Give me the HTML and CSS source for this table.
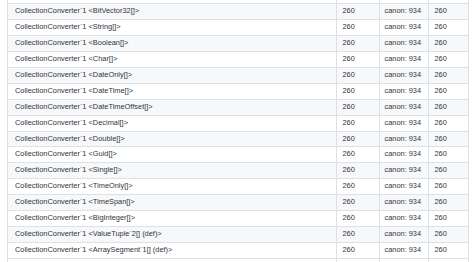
FILE: index.html
```html
<!DOCTYPE html>
<html>
<head>
<meta charset="utf-8">
<link rel="stylesheet" href="styles.css">
</head>
<body>
<div class="wrap">
<table class="tbl">
<colgroup><col class="c1"><col class="c2"><col class="c3"><col class="c4"></colgroup>
<tbody>
<tr class="edge"><td></td><td></td><td></td><td></td></tr>
<tr><td>CollectionConverter`1 &lt;BitVector32[]&gt;</td><td>260</td><td>canon: 934</td><td>260</td></tr>
<tr><td>CollectionConverter`1 &lt;String[]&gt;</td><td>260</td><td>canon: 934</td><td>260</td></tr>
<tr><td>CollectionConverter`1 &lt;Boolean[]&gt;</td><td>260</td><td>canon: 934</td><td>260</td></tr>
<tr><td>CollectionConverter`1 &lt;Char[]&gt;</td><td>260</td><td>canon: 934</td><td>260</td></tr>
<tr><td>CollectionConverter`1 &lt;DateOnly[]&gt;</td><td>260</td><td>canon: 934</td><td>260</td></tr>
<tr><td>CollectionConverter`1 &lt;DateTime[]&gt;</td><td>260</td><td>canon: 934</td><td>260</td></tr>
<tr><td>CollectionConverter`1 &lt;DateTimeOffset[]&gt;</td><td>260</td><td>canon: 934</td><td>260</td></tr>
<tr><td>CollectionConverter`1 &lt;Decimal[]&gt;</td><td>260</td><td>canon: 934</td><td>260</td></tr>
<tr><td>CollectionConverter`1 &lt;Double[]&gt;</td><td>260</td><td>canon: 934</td><td>260</td></tr>
<tr><td>CollectionConverter`1 &lt;Guid[]&gt;</td><td>260</td><td>canon: 934</td><td>260</td></tr>
<tr><td>CollectionConverter`1 &lt;Single[]&gt;</td><td>260</td><td>canon: 934</td><td>260</td></tr>
<tr><td>CollectionConverter`1 &lt;TimeOnly[]&gt;</td><td>260</td><td>canon: 934</td><td>260</td></tr>
<tr><td>CollectionConverter`1 &lt;TimeSpan[]&gt;</td><td>260</td><td>canon: 934</td><td>260</td></tr>
<tr><td>CollectionConverter`1 &lt;BigInteger[]&gt;</td><td>260</td><td>canon: 934</td><td>260</td></tr>
<tr><td>CollectionConverter`1 &lt;ValueTuple`2[] (def)&gt;</td><td>260</td><td>canon: 934</td><td>260</td></tr>
<tr><td>CollectionConverter`1 &lt;ArraySegment`1[] (def)&gt;</td><td>260</td><td>canon: 934</td><td>260</td></tr>
<tr class="edge"><td></td><td></td><td></td><td></td></tr>
</tbody>
</table>
</div>
</body>
</html>
```
FILE: styles.css
```css
html, body {
  margin: 0;
  padding: 0;
  background: #ffffff;
}
.wrap {
  width: 474px;
  height: 262px;
  overflow: hidden;
  padding-left: 6.5px;
  box-sizing: border-box;
}
.tbl {
  border-collapse: collapse;
  table-layout: fixed;
  width: 461px;
  margin-top: -11.93px;
  font-family: "Liberation Sans", Arial, sans-serif;
  font-size: 7.4px;
  color: #303438;
}
.c1 { width: 329.5px; }
.c2 { width: 42.5px; }
.c3 { width: 49px; }
.c4 { width: 40px; }
.tbl td {
  border: 1px solid #dde1e6;
  height: 14.93px;
  padding: 0 0 0 6px;
  line-height: 14.93px;
  white-space: nowrap;
  overflow: hidden;
  box-sizing: border-box;
}
.tbl td:first-child { padding-left: 7.5px; }
.tbl td:nth-child(2) { padding-left: 5.5px; }
.tbl td:nth-child(3) { padding-left: 5px; }
.tbl tr:nth-child(even) { background: #f6f8fa; }
.tbl tr:nth-child(odd) { background: #ffffff; }
.tbl tr.edge { background: #ffffff; }
```
